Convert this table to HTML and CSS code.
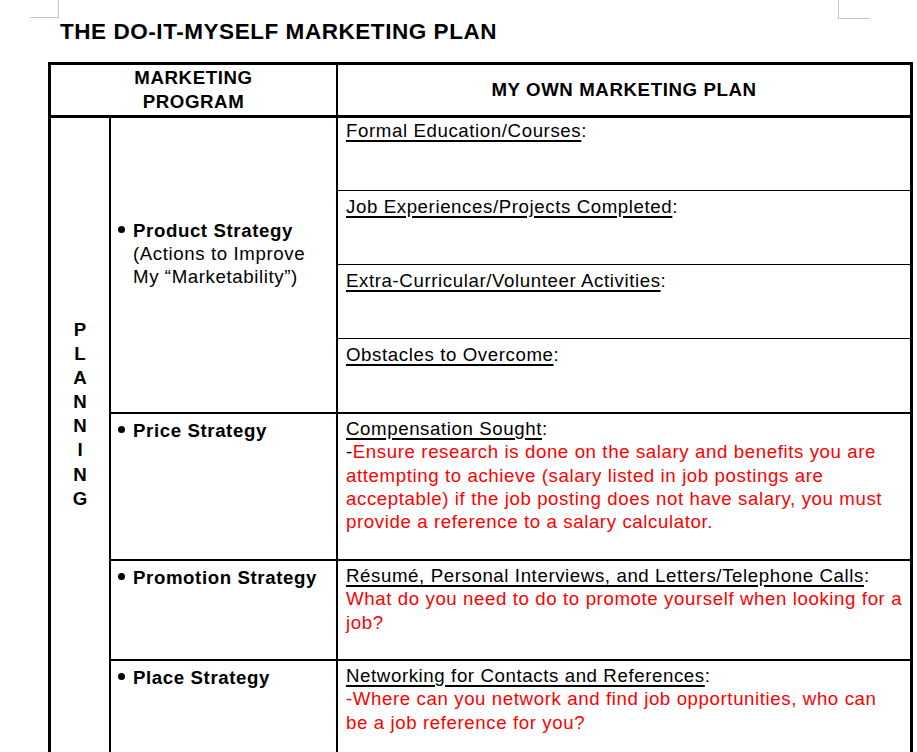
FILE: index.html
```html
<!DOCTYPE html>
<html lang="en">
<head>
<meta charset="utf-8">
<title>The Do-It-Myself Marketing Plan</title>
<link rel="stylesheet" href="styles.css">
</head>
<body>
<div class="crop crop-left"></div>
<div class="crop crop-right"></div>
<main class="page">
  <h1 class="title">THE DO-IT-MYSELF MARKETING PLAN</h1>
  <div class="plan">
    <div class="head head-program">MARKETING<br>PROGRAM</div>
    <div class="head head-mine">MY OWN MARKETING PLAN</div>

    <div class="phase">
      <span>P</span><span>L</span><span>A</span><span>N</span><span>N</span><span>I</span><span>N</span><span>G</span>
    </div>

    <div class="strategy strategy-product">
      <div class="item"><span class="dot"></span><b>Product Strategy</b></div>
      <div class="item-note">(Actions to Improve<br>My “Marketability”)</div>
    </div>

    <div class="entry entry-first thin"><span class="label">Formal Education/Courses</span>:</div>
    <div class="entry entry-mid thin"><span class="label">Job Experiences/Projects Completed</span>:</div>
    <div class="entry entry-mid thin"><span class="label">Extra-Curricular/Volunteer Activities</span>:</div>
    <div class="entry entry-mid thick"><span class="label">Obstacles to Overcome</span>:</div>

    <div class="strategy strategy-top">
      <div class="item"><span class="dot"></span><b>Price Strategy</b></div>
    </div>
    <div class="entry thick">
      <span class="label">Compensation Sought</span>:<br>-<span class="note">Ensure research is done on the salary and benefits you are attempting to achieve (salary listed in job postings are acceptable) if the job posting does not have salary, you must provide a reference to a salary calculator.</span>
    </div>

    <div class="strategy strategy-top">
      <div class="item"><span class="dot"></span><b>Promotion Strategy</b></div>
    </div>
    <div class="entry thick">
      <span class="label"><span class="spell">Résumé</span>, Personal Interviews, and Letters/Telephone Calls</span>:<br><span class="note">What do you need to do to promote yourself when looking for a job?</span>
    </div>

    <div class="strategy strategy-top">
      <div class="item"><span class="dot"></span><b>Place Strategy</b></div>
    </div>
    <div class="entry thick">
      <span class="label">Networking for Contacts and References</span>:<br><span class="note">-Where can you network and find job opportunities, who can<br>be a job reference for you?</span>
    </div>
  </div>
</main>
</body>
</html>
```

FILE: styles.css
```css
* {
  box-sizing: border-box;
}

html, body {
  margin: 0;
  padding: 0;
  background: #ffffff;
}

body {
  font-family: "Liberation Sans", Arial, sans-serif;
  color: #000000;
  overflow: hidden;
}

.crop {
  position: absolute;
  top: 0;
  border-color: #c4c4c4;
  border-style: solid;
}

.crop-left {
  left: 30px;
  width: 29px;
  height: 18px;
  border-width: 0 1px 1px 0;
}

.crop-right {
  left: 838px;
  width: 31px;
  height: 19px;
  border-width: 0 0 1px 1px;
}

.page {
  padding-top: 19px;
}

.title {
  margin: 0 0 17px 60px;
  font-size: 22.5px;
  line-height: 26px;
  font-weight: bold;
  letter-spacing: 0.55px;
}

.plan {
  margin-left: 48px;
  width: 865px;
  border: 3px solid #000000;
  display: grid;
  grid-template-columns: 60px 227px 572px;
  grid-template-rows: 53px 73px 74px 74px 75px 147px 100px 120px;
  font-size: 18.67px;
  line-height: 23.3px;
  letter-spacing: 0.6px;
}

.head {
  grid-row: 1;
  display: flex;
  align-items: center;
  justify-content: center;
  text-align: center;
  font-weight: bold;
  border-bottom: 3px solid #000000;
}

.head-program {
  grid-column: 1 / 3;
  border-right: 2px solid #000000;
  line-height: 23.8px;
  padding-bottom: 1px;
}

.head-mine {
  grid-column: 3;
  padding-top: 0;
}

.phase {
  grid-column: 1;
  grid-row: 2 / 9;
  border-right: 2px solid #000000;
  padding-top: 200px;
  display: flex;
  flex-direction: column;
  align-items: center;
  font-weight: bold;
  line-height: 24.1px;
  letter-spacing: 0;
}

.strategy {
  grid-column: 2;
  border-right: 2px solid #000000;
  border-bottom: 2px solid #000000;
  padding: 5px 4px 0 7px;
}

.strategy-product {
  grid-row: 2 / 6;
  display: flex;
  flex-direction: column;
  justify-content: center;
  padding-top: 0;
  padding-bottom: 23px;
}

.item {
  display: flex;
  align-items: baseline;
}

.dot {
  flex: none;
  width: 7px;
  height: 7px;
  border-radius: 50%;
  background: #000000;
  margin-right: 8px;
  position: relative;
  top: -4px;
}

.item-note {
  padding-left: 15px;
}

.entry {
  grid-column: 3;
  padding: 3px 2px 0 8px;
}

.entry-first {
  padding-top: 1px;
}

.entry-mid {
  padding-top: 4px;
}

.thin {
  border-bottom: 1px solid #000000;
}

.thick {
  border-bottom: 2px solid #000000;
}

.label {
  text-decoration: underline;
  text-decoration-thickness: 1.5px;
  text-underline-offset: 3px;
}

.spell {
  border-bottom: 1px dotted #d40000;
}

.note {
  color: #ff0000;
}
```
